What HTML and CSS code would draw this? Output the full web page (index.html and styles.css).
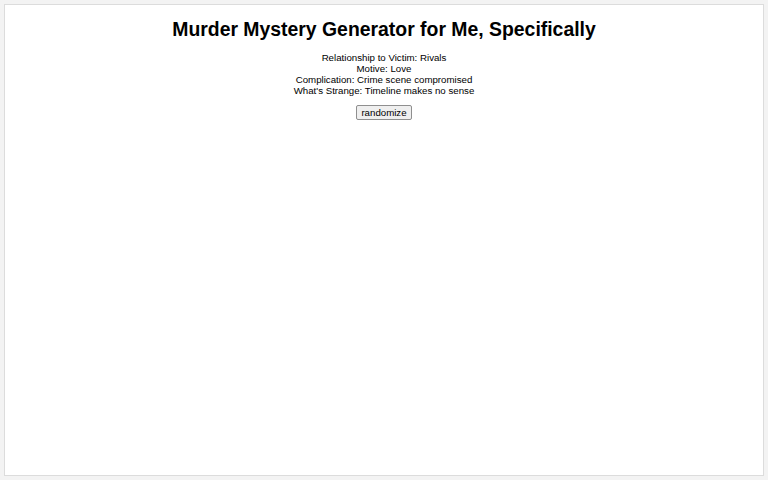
FILE: index.html
```html
<!DOCTYPE html>
<html>
<head>
<meta charset="utf-8">
<title>Murder Mystery Generator for Me, Specifically</title>
<link rel="stylesheet" href="styles.css">
</head>
<body>
<main class="panel">
  <h1 class="title">Murder Mystery Generator for Me, Specifically</h1>
  <div class="result">
    <div>Relationship to Victim: Rivals</div>
    <div>Motive: Love</div>
    <div>Complication: Crime scene compromised</div>
    <div>What's Strange: Timeline makes no sense</div>
  </div>
  <button class="randomize" type="button">randomize</button>
</main>
</body>
</html>
```
FILE: styles.css
```css
html, body {
  margin: 0;
  height: 100%;
}

body {
  background: #f3f3f3;
  padding: 4px;
  box-sizing: border-box;
  font-family: "Liberation Sans", Arial, sans-serif;
}

.panel {
  box-sizing: border-box;
  height: 100%;
  background: #fff;
  border: 1px solid #dcdcdc;
  display: flex;
  flex-direction: column;
  align-items: center;
  padding-top: 13px;
}

.title {
  margin: 0 0 11px;
  font-size: 19.4px;
  line-height: 23px;
  font-weight: bold;
  color: #000;
}

.result {
  font-size: 9.7px;
  line-height: 11px;
  text-align: center;
  color: #000;
}

.randomize {
  margin-top: 9px;
  font-family: "Liberation Sans", Arial, sans-serif;
  font-size: 9.7px;
  line-height: 11px;
  padding: 1px 4px;
  background: #efefef;
  border: 1px solid #8f8f8f;
  border-radius: 2px;
  color: #000;
}
```
